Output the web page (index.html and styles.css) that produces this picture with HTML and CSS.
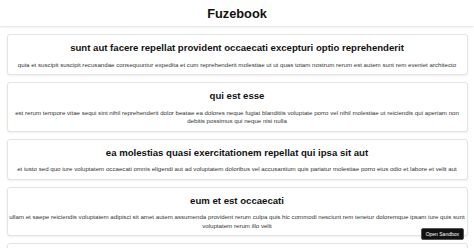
FILE: index.html
```html
<!DOCTYPE html>
<html lang="en">
<head>
<meta charset="utf-8">
<title>Fuzebook</title>
<link rel="stylesheet" href="styles.css">
</head>
<body>
<header class="topbar"><h1 class="brand">Fuzebook</h1></header>
<main class="feed">
  <article class="post">
    <h2 class="post-title">sunt aut facere repellat provident occaecati excepturi optio reprehenderit</h2>
    <p class="post-body">quia et suscipit suscipit recusandae consequuntur expedita et cum reprehenderit molestiae ut ut quas totam nostrum rerum est autem sunt rem eveniet architecto</p>
  </article>
  <article class="post">
    <h2 class="post-title">qui est esse</h2>
    <p class="post-body">est rerum tempore vitae sequi sint nihil reprehenderit dolor beatae ea dolores neque fugiat blanditiis voluptate porro vel nihil molestiae ut reiciendis qui aperiam non debitis possimus qui neque nisi nulla</p>
  </article>
  <article class="post">
    <h2 class="post-title">ea molestias quasi exercitationem repellat qui ipsa sit aut</h2>
    <p class="post-body">et iusto sed quo iure voluptatem occaecati omnis eligendi aut ad voluptatem doloribus vel accusantium quis pariatur molestiae porro eius odio et labore et velit aut</p>
  </article>
  <article class="post">
    <h2 class="post-title">eum et est occaecati</h2>
    <p class="post-body">ullam et saepe reiciendis voluptatem adipisci sit amet autem assumenda provident rerum culpa quis hic commodi nesciunt rem tenetur doloremque ipsam iure quis sunt voluptatem rerum illo velit</p>
  </article>
  <article class="post">
    <h2 class="post-title">nesciunt quas odio</h2>
    <p class="post-body">repudiandae veniam quaerat sunt sed alias aut fugiat sit autem sed est voluptatem omnis possimus esse voluptatibus quis est aut tenetur dolor neque</p>
  </article>
</main>
<a class="sandbox-btn" href="#">Open Sandbox</a>
</body>
</html>
```
FILE: styles.css
```css
* { box-sizing: border-box; }
html, body { margin: 0; padding: 0; background: #fff; }
body {
  font-family: "Liberation Sans", Arial, sans-serif;
  color: #222;
  overflow: hidden;
}
.topbar {
  height: 26px;
  display: flex;
  align-items: center;
  justify-content: center;
  background: #fff;
  box-shadow: 0 1px 2px rgba(0, 0, 0, 0.13);
  position: relative;
  z-index: 1;
}
.brand {
  margin: 0;
  padding-top: 1px;
  font-size: 12.8px;
  line-height: 15px;
  font-weight: bold;
  color: #111;
}
.feed {
  display: flex;
  flex-direction: column;
  gap: 7px;
  padding: 8px 6.5px 0;
}
.post {
  border: 1px solid #e4e4e4;
  border-radius: 3px;
  box-shadow: 0 1px 2px rgba(0, 0, 0, 0.07);
  padding: 7px 0 5px;
  text-align: center;
  background: #fff;
}
.post-title {
  margin: 0 0 7.5px;
  font-size: 9.6px;
  line-height: 11px;
  font-weight: bold;
  color: #111;
}
.post-body {
  margin: 0;
  font-size: 6.15px;
  line-height: 8.5px;
  color: #333;
}
.sandbox-btn {
  position: fixed;
  right: 10px;
  bottom: 8px;
  height: 12px;
  padding: 0 4px;
  display: flex;
  align-items: center;
  background: #111;
  border: 1px solid #555;
  border-radius: 2px;
  color: #fff;
  font-size: 5px;
  text-decoration: none;
}
```
